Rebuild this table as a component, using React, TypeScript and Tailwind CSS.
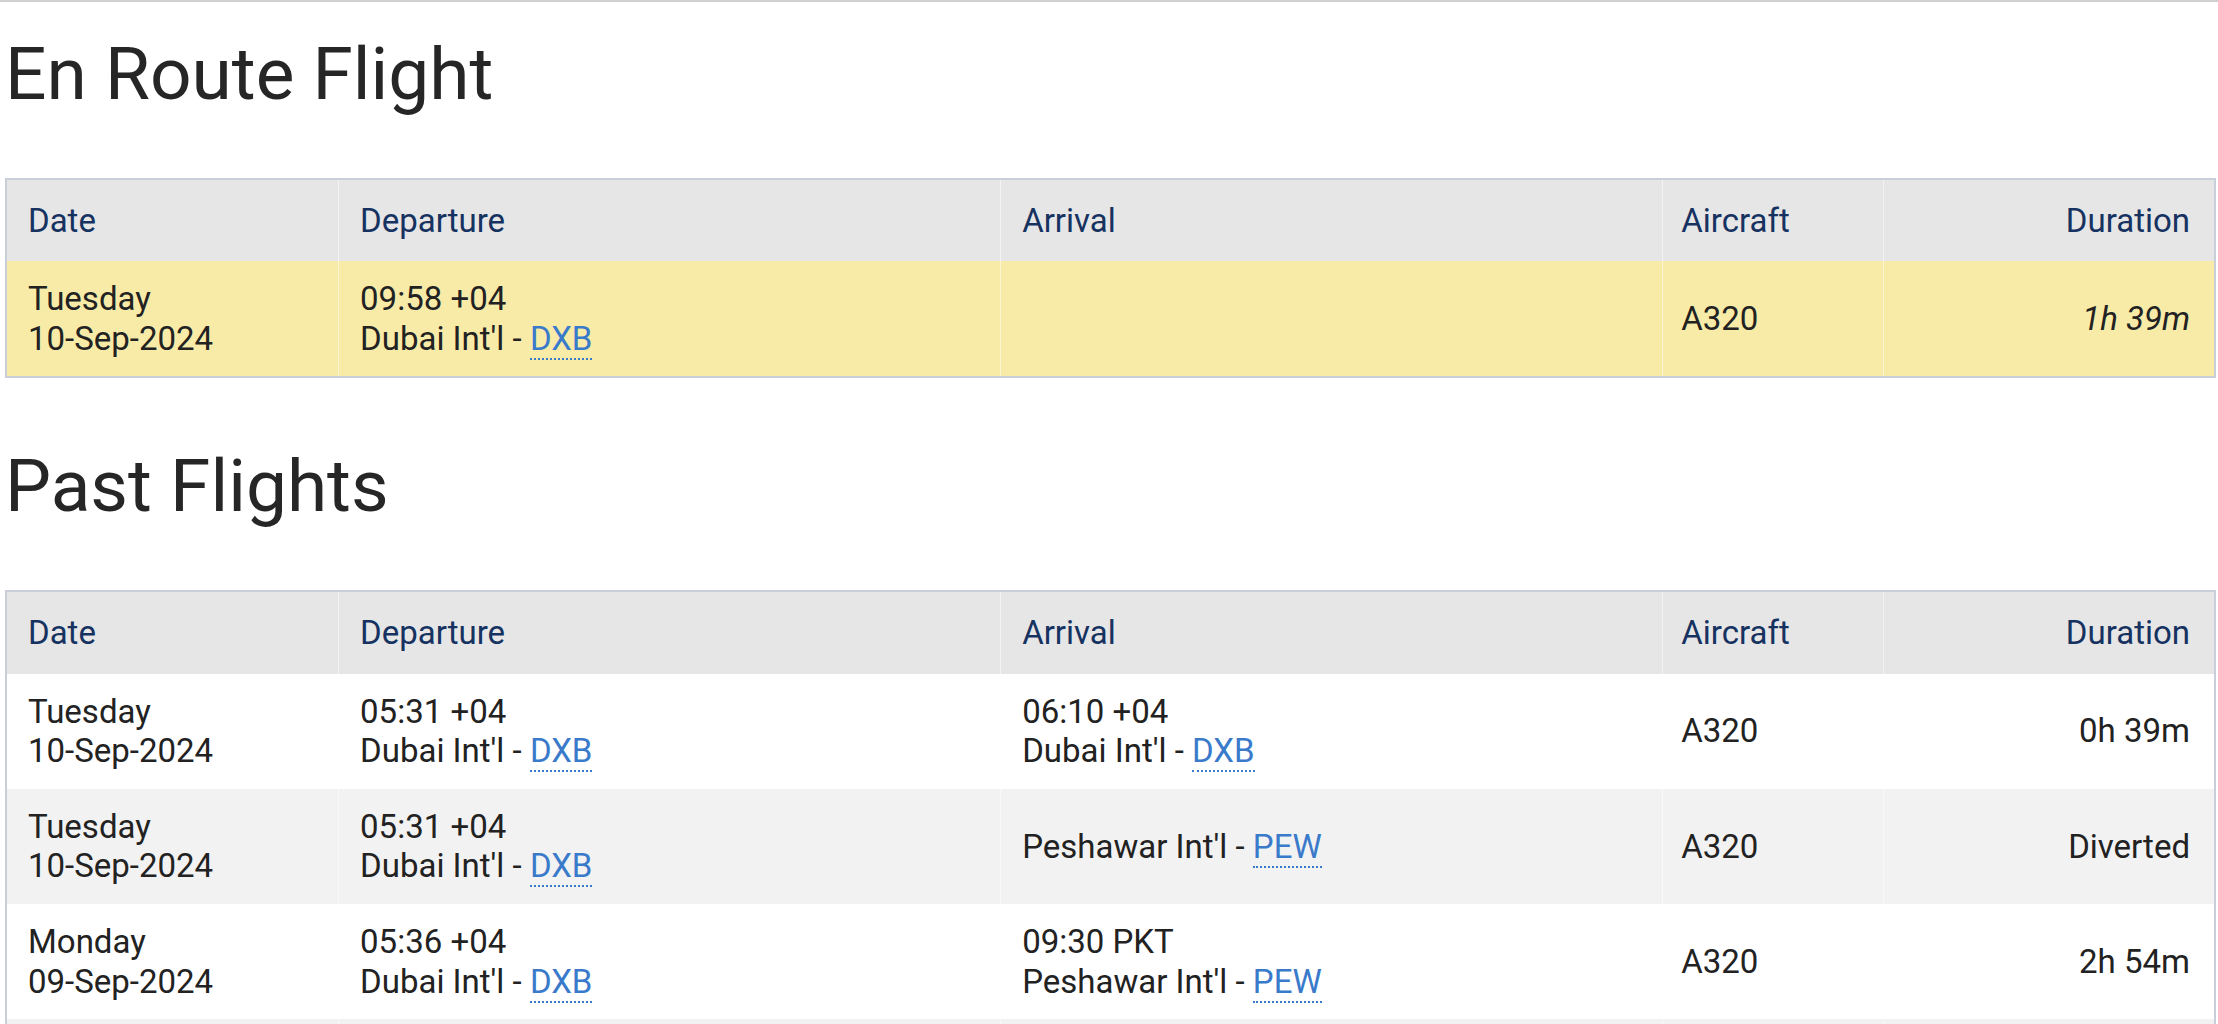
type Place = { time?: string; name: string; code: string };

type Flight = {
  day: string;
  date: string;
  dep: Place;
  arr?: Place;
  aircraft: string;
  duration: string;
};

const enRoute: Flight = {
  day: 'Tuesday',
  date: '10-Sep-2024',
  dep: { time: '09:58 +04', name: "Dubai Int'l", code: 'DXB' },
  aircraft: 'A320',
  duration: '1h 39m',
};

const past: Flight[] = [
  {
    day: 'Tuesday',
    date: '10-Sep-2024',
    dep: { time: '05:31 +04', name: "Dubai Int'l", code: 'DXB' },
    arr: { time: '06:10 +04', name: "Dubai Int'l", code: 'DXB' },
    aircraft: 'A320',
    duration: '0h 39m',
  },
  {
    day: 'Tuesday',
    date: '10-Sep-2024',
    dep: { time: '05:31 +04', name: "Dubai Int'l", code: 'DXB' },
    arr: { name: "Peshawar Int'l", code: 'PEW' },
    aircraft: 'A320',
    duration: 'Diverted',
  },
  {
    day: 'Monday',
    date: '09-Sep-2024',
    dep: { time: '05:36 +04', name: "Dubai Int'l", code: 'DXB' },
    arr: { time: '09:30 PKT', name: "Peshawar Int'l", code: 'PEW' },
    aircraft: 'A320',
    duration: '2h 54m',
  },
];

function Airport({ place }: { place?: Place }) {
  if (!place) return null;
  return (
    <>
      {place.time && <div>{place.time}</div>}
      <div>
        {place.name} -{' '}
        <span className="text-[#3a7acb] border-b-2 border-dotted border-[#3a7acb]">{place.code}</span>
      </div>
    </>
  );
}

function Heading({ children, first }: { children: string; first?: boolean }) {
  return (
    <h1
      className={`${first ? 'mt-[29px]' : 'mt-[65px]'} mb-[59px] text-[73px] leading-[1.2] font-normal text-[#262626]`}
    >
      {children}
    </h1>
  );
}

function FlightTable({ rows, enroute, more }: { rows: Flight[]; enroute?: boolean; more?: boolean }) {
  const td = 'px-[21px] py-[18px] align-middle';
  const sep = 'border-l border-white/50';
  const th = 'px-[21px] py-[21px] font-normal';
  return (
    <table className="w-[2211px] table-fixed border-separate border-spacing-0 border-2 border-[#c8cfd8] text-[33px] leading-[1.2] text-[#222]">
      <colgroup>
        <col className="w-[15%]" />
        <col className="w-[30%]" />
        <col className="w-[30%]" />
        <col className="w-[10%]" />
        <col className="w-[15%]" />
      </colgroup>
      <thead>
        <tr className="bg-[#e6e6e6] text-[#163261]">
          <th className={`${th} text-left`}>Date</th>
          <th className={`${th} text-left ${sep}`}>Departure</th>
          <th className={`${th} text-left ${sep}`}>Arrival</th>
          <th className={`${th} !pl-[18px] text-left ${sep}`}>Aircraft</th>
          <th className={`${th} !pr-[24px] text-right ${sep}`}>Duration</th>
        </tr>
      </thead>
      <tbody>
        {rows.map((f, i) => (
          <tr
            key={i}
            className={enroute ? 'bg-[#f8eba7]' : i % 2 === 0 ? 'bg-white' : 'bg-[#f2f2f2]'}
          >
            <td className={td}>
              <div>{f.day}</div>
              <div>{f.date}</div>
            </td>
            <td className={`${td} ${sep}`}>
              <Airport place={f.dep} />
            </td>
            <td className={`${td} ${sep}`}>
              <Airport place={f.arr} />
            </td>
            <td className={`${td} !pl-[18px] ${sep}`}>{f.aircraft}</td>
            <td className={`${td} !pr-[24px] ${sep} text-right ${enroute ? 'italic' : ''}`}>{f.duration}</td>
          </tr>
        ))}
        {more && (
          <tr className="bg-[#f2f2f2] h-[115px]">
            <td />
            <td className={sep} />
            <td className={sep} />
            <td className={sep} />
            <td className={sep} />
          </tr>
        )}
      </tbody>
    </table>
  );
}

export default function App() {
  return (
    <div className="h-screen bg-white font-['Roboto',sans-serif] border-t-2 border-[#d0d0d0] overflow-hidden">
      <div className="pl-[5px]">
        <Heading first>En Route Flight</Heading>
        <FlightTable rows={[enRoute]} enroute />
        <Heading>Past Flights</Heading>
        <FlightTable rows={past} more />
      </div>
    </div>
  );
}
